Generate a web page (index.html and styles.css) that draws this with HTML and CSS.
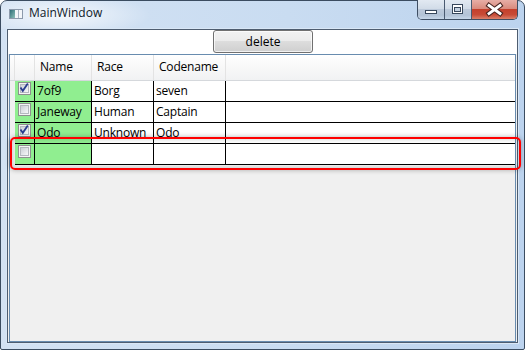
FILE: index.html
```html
<!DOCTYPE HTML>
<html>
  <head>
    <meta http-equiv="Content-Type" content="text/html; charset=utf-8" />
    <link rel="stylesheet" href="styles.css">
  </head>
  <body>
    <div class="window">
      <div class="titlebar">
        <svg class="app-icon" width="14" height="10" viewBox="0 0 14 10">
          <defs>
            <linearGradient id="ico" x1="0" y1="0" x2="1" y2="1">
              <stop offset="0" stop-color="#2E6F78"/>
              <stop offset="1" stop-color="#8CC0B8"/>
            </linearGradient>
          </defs>
          <rect x="0.5" y="0.5" width="13" height="9" fill="#F3F6F9" stroke="#8C9AAB"/>
          <rect x="1" y="1" width="5" height="8" fill="url(#ico)"/>
          <rect x="9" y="1" width="1" height="8" fill="#A9B6C4"/>
        </svg>
        <span class="title">MainWindow</span>
        <div class="caption">
          <div class="cap-btn min">
            <svg width="26" height="19" viewBox="0 0 26 19"><rect x="7.5" y="10.5" width="11" height="3" fill="#fff" stroke="#37475B"/></svg>
          </div>
          <div class="cap-btn max">
            <svg width="26" height="19" viewBox="0 0 26 19">
              <rect x="7.5" y="4.5" width="10" height="9" fill="#fff" stroke="#37475B"/>
              <rect x="9.5" y="7.5" width="6" height="4" fill="#C3D0DF" stroke="#37475B"/>
            </svg>
          </div>
          <div class="cap-btn close">
            <svg width="45" height="19" viewBox="0 0 45 19">
              <path d="M17 5.5 L28 13.5 M28 5.5 L17 13.5" stroke="#4A2420" stroke-width="5" stroke-linecap="square"/>
              <path d="M17 5.5 L28 13.5 M28 5.5 L17 13.5" stroke="#fff" stroke-width="2.8" stroke-linecap="square"/>
            </svg>
          </div>
        </div>
      </div>

      <div class="client">
        <div class="toolbar"><button class="btn">delete</button></div>

        <div class="grid">
          <div class="row head">
            <div class="rh"></div>
            <div class="cell c-check"></div>
            <div class="cell c-name">Name</div>
            <div class="cell c-race">Race</div>
            <div class="cell c-code">Codename</div>
            <div class="cell c-fill"></div>
          </div>

          <div class="row">
            <div class="rh"></div>
            <div class="cell c-check"><span class="cb checked"><svg width="11" height="11" viewBox="0 0 11 11"><path d="M1.5 4.5 L3.8 7.8 L8.8 0.5" stroke="#2A3C8E" stroke-width="1.8" fill="none"/></svg></span></div>
            <div class="cell c-name">7of9</div>
            <div class="cell c-race">Borg</div>
            <div class="cell c-code">seven</div>
            <div class="cell c-fill"></div>
          </div>

          <div class="row">
            <div class="rh"></div>
            <div class="cell c-check"><span class="cb"></span></div>
            <div class="cell c-name">Janeway</div>
            <div class="cell c-race">Human</div>
            <div class="cell c-code">Captain</div>
            <div class="cell c-fill"></div>
          </div>

          <div class="row">
            <div class="rh"></div>
            <div class="cell c-check"><span class="cb checked"><svg width="11" height="11" viewBox="0 0 11 11"><path d="M1.5 4.5 L3.8 7.8 L8.8 0.5" stroke="#2A3C8E" stroke-width="1.8" fill="none"/></svg></span></div>
            <div class="cell c-name">Odo</div>
            <div class="cell c-race">Unknown</div>
            <div class="cell c-code">Odo</div>
            <div class="cell c-fill"></div>
          </div>

          <div class="row">
            <div class="rh"></div>
            <div class="cell c-check"><span class="cb"></span></div>
            <div class="cell c-name"></div>
            <div class="cell c-race"></div>
            <div class="cell c-code"></div>
            <div class="cell c-fill"></div>
          </div>
        </div>

        <div class="highlight"></div>
      </div>
    </div>
  </body>
</html>
```

FILE: styles.css
```css
body      { margin: 0; font-family: "Open Sans", sans-serif; font-size: 12px; letter-spacing: -0.2px; color: #000; }

.window   { box-sizing: border-box; width: 525px; height: 350px; border: 1px solid #3B4C60; border-radius: 7px 7px 2px 2px;
            background: linear-gradient(to right, #D3E2F3, #C9DCF1 55%, #BCD3EE); display: flex; flex-direction: column; }

.titlebar { height: 28px; display: flex; align-items: flex-start; flex-shrink: 0;
            background: radial-gradient(ellipse 90px 22px at 60px 14px, rgba(255,255,255,0.75), rgba(255,255,255,0)); }
.app-icon { margin: 8px 0 0 8px; }
.title    { margin: 4px 0 0 6px; line-height: 16px; color: #0E1A2A; letter-spacing: 0; }

.caption  { margin: -1px 6px 0 auto; display: flex; height: 19px; border: 1px solid #3E4E63; border-top: 0;
            border-radius: 0 0 5px 5px; overflow: hidden; }
.cap-btn  { height: 19px; }
.cap-btn + .cap-btn { border-left: 1px solid #4A5A70; }
.min, .max { width: 26px; background: linear-gradient(#E2E9F2 0%, #D2DCE8 45%, #BCC9DA 50%, #B3C3D6 80%, #C6D6E8 100%); }
.close    { width: 45px; background: linear-gradient(#E7AEA6 0%, #D98B7E 45%, #C4402C 50%, #C84B36 78%, #DB816B 100%); }
.cap-btn svg { display: block; }

.client   { position: relative; flex: 1; margin: 0 6px 6px; border: 1px solid #4E5D70; background: #F0F0F0;
            box-shadow: 0 0 0 1px #D9E7F6; display: flex; flex-direction: column; }

.toolbar  { height: 24px; background: #fff; display: flex; justify-content: center; align-items: flex-start; }
.btn      { width: 100px; height: 23px; margin-left: 1px; padding: 0; border: 1px solid #707070; border-radius: 3px;
            background: linear-gradient(#F2F2F2 0%, #EBEBEB 50%, #DDDDDD 50%, #CFCFCF 100%);
            box-shadow: inset 0 0 0 1px rgba(255,255,255,0.7); font: 12px "Open Sans", sans-serif; color: #000; }

.grid     { flex: 1; margin: 0 1px; border: 1px solid #688CAF; background: #F0F0F0; }

.row      { display: flex; height: 21px; }
.rh       { width: 5px; background: #F0F0F0; }
.cell     { box-sizing: border-box; height: 21px; border-right: 1px solid #000; border-bottom: 1px solid #000;
            line-height: 20px; padding-left: 2px; background: #fff; white-space: nowrap; }
.c-check  { width: 20px; padding-left: 3px; padding-top: 1px; background: #90EE90; }
.c-name   { width: 57px; background: #90EE90; }
.c-race   { width: 62px; }
.c-code   { width: 72px; }
.c-fill   { flex: 1; border-right: 0; }

.head     { height: 26px; background: linear-gradient(#FFFFFF 0%, #F9F9F9 40%, #F1F2F3 100%); border-bottom: 1px solid #D5D8DC; box-sizing: border-box; }
.head .rh { background: transparent; border-right: 1px solid #E3E3E3; width: 5px; box-sizing: border-box; }
.head .cell { height: 25px; background: transparent; border-bottom: 0; border-right: 1px solid #E3E3E3;
              line-height: 23px; padding-left: 5px; }
.head .c-fill { border-right: 0; }

.cb       { display: block; position: relative; box-sizing: border-box; width: 13px; height: 13px; border: 1px solid #8E8F8F;
            background: linear-gradient(135deg, #CCD0D6, #F7F8F9) no-repeat 2px 2px / 7px 7px, #F4F4F4;
            box-shadow: inset 0 0 0 1px #F4F4F4, inset 0 0 0 2px #B4B8BE; }
.cb svg   { position: absolute; left: 0; top: 0; }

.highlight { position: absolute; left: 2px; top: 107px; width: 511px; height: 33px; box-sizing: border-box;
             border: 2px solid #FF0000; border-radius: 5px;
             box-shadow: 0 0 5px rgba(0,0,0,0.3), inset 0 0 5px rgba(0,0,0,0.2); }
```
